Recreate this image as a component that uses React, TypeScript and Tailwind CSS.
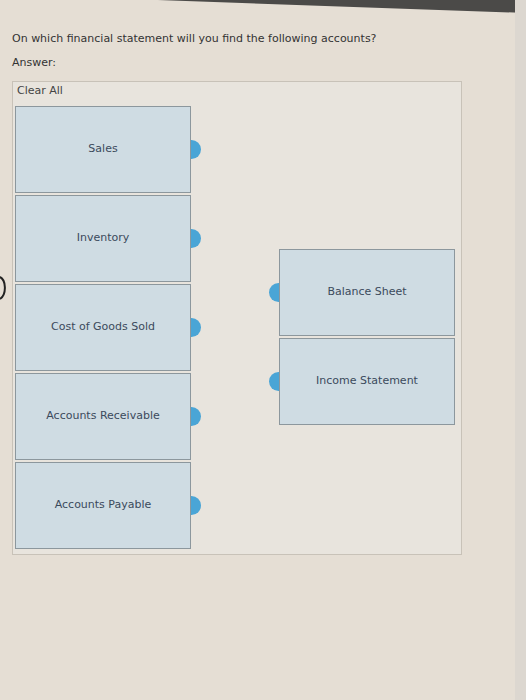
import React from "react";

const leftItems = [
  "Sales",
  "Inventory",
  "Cost of Goods Sold",
  "Accounts Receivable",
  "Accounts Payable",
];

const rightItems = ["Balance Sheet", "Income Statement"];

function Tab({ side }: { side: "left" | "right" }) {
  return (
    <span
      className={
        side === "right"
          ? "h-[19px] w-[10px] shrink-0 rounded-r-full bg-[#4aa5d6]"
          : "h-[19px] w-[10px] shrink-0 rounded-l-full bg-[#4aa5d6]"
      }
    />
  );
}

function Card({ label }: { label: string }) {
  return (
    <div className="flex h-[87px] w-[176px] items-center justify-center border border-[#8c979d] bg-[#cfdce3] text-[11px] text-[#3b4a5c]">
      {label}
    </div>
  );
}

export default function App() {
  return (
    <div
      className="relative flex h-[700px] w-[526px] flex-col overflow-hidden bg-[#e5ded4] text-[#333]"
      style={{ fontFamily: '"DejaVu Sans", Verdana, sans-serif' }}
    >
      {/* monitor bezel along the top */}
      <div className="absolute left-0 top-0 h-[13px] w-full bg-[#4b4a48] [clip-path:polygon(30%_0,100%_0,100%_100%,100%_100%)]" />
      <div className="absolute right-0 top-0 h-full w-[11px] bg-[#dcd7d0]" />

      {/* dark arc peeking in from the left edge */}
      <svg className="absolute left-0 top-[276px]" width="8" height="24" viewBox="0 0 8 24">
        <path d="M0 1 C6 4 7 18 0 23" fill="none" stroke="#222" strokeWidth="2" />
      </svg>

      <div className="flex flex-col px-3 pt-[32px]">
        <p className="text-[11px] leading-[14px]">
          On which financial statement will you find the following accounts?
        </p>
        <p className="mt-[10px] text-[11px] leading-[14px]">Answer:</p>

        <div className="mt-[11px] flex h-[474px] w-[450px] flex-col border border-[#c8c2b8] bg-[#e8e4dd] pl-[2px]">
          <div className="px-[2px] pt-[2px] text-[11px] leading-[14px] text-[#444]">
            Clear All
          </div>

          <div className="mt-[8px] flex">
            <div className="flex flex-col gap-[2px]">
              {leftItems.map((item) => (
                <div key={item} className="flex items-center">
                  <Card label={item} />
                  <Tab side="right" />
                </div>
              ))}
            </div>

            <div className="ml-[68px] mt-[143px] flex flex-col gap-[2px]">
              {rightItems.map((item) => (
                <div key={item} className="flex items-center">
                  <Tab side="left" />
                  <Card label={item} />
                </div>
              ))}
            </div>
          </div>
        </div>
      </div>
    </div>
  );
}
